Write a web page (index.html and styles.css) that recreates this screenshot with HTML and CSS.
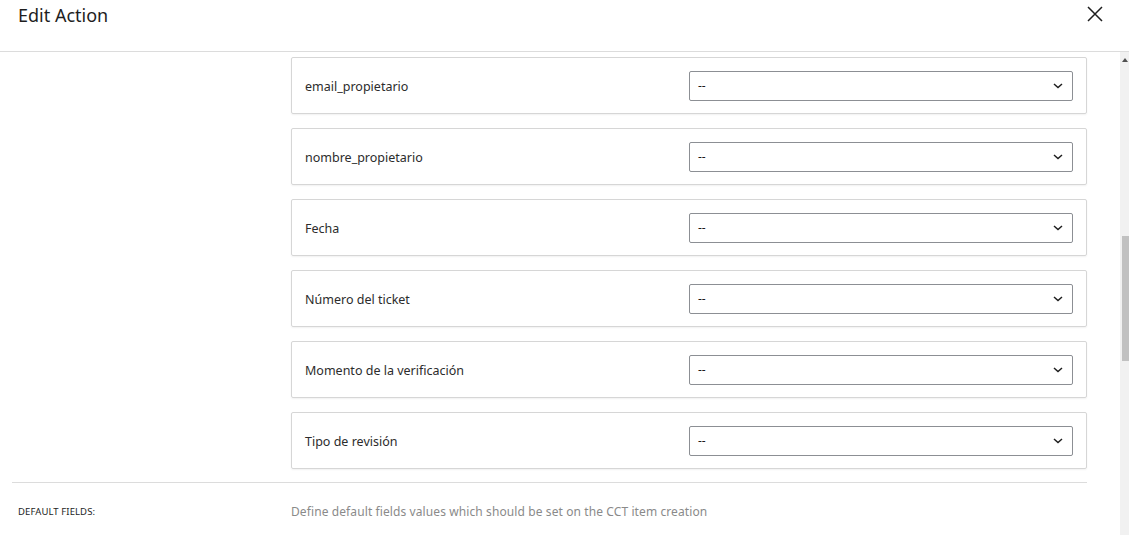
FILE: index.html
```html
<!DOCTYPE html>
<html lang="en">
<head>
<meta charset="utf-8">
<title>Edit Action</title>
<link rel="stylesheet" href="styles.css">
</head>
<body>
<div class="modal">
  <header class="modal-header">
    <h1 class="modal-title">Edit Action</h1>
    <button class="close-btn" aria-label="Close">
      <svg width="16" height="16" viewBox="0 0 16 16"><path d="M1 1L15 15M15 1L1 15" stroke="#1e1e1e" stroke-width="1.5" fill="none"/></svg>
    </button>
  </header>
  <div class="modal-body">
    <div class="content">
      <div class="map-row">
        <div class="map-spacer"></div>
        <div class="map-list">
          <div class="card"><span class="card-label">email_propietario</span><div class="select"><span>--</span><svg class="chev" width="10" height="6" viewBox="0 0 10 6"><path d="M1 1L5 4.5L9 1" stroke="#1e1e1e" stroke-width="1.5" fill="none"/></svg></div></div>
          <div class="card"><span class="card-label">nombre_propietario</span><div class="select"><span>--</span><svg class="chev" width="10" height="6" viewBox="0 0 10 6"><path d="M1 1L5 4.5L9 1" stroke="#1e1e1e" stroke-width="1.5" fill="none"/></svg></div></div>
          <div class="card"><span class="card-label">Fecha</span><div class="select"><span>--</span><svg class="chev" width="10" height="6" viewBox="0 0 10 6"><path d="M1 1L5 4.5L9 1" stroke="#1e1e1e" stroke-width="1.5" fill="none"/></svg></div></div>
          <div class="card"><span class="card-label">Número del ticket</span><div class="select"><span>--</span><svg class="chev" width="10" height="6" viewBox="0 0 10 6"><path d="M1 1L5 4.5L9 1" stroke="#1e1e1e" stroke-width="1.5" fill="none"/></svg></div></div>
          <div class="card"><span class="card-label">Momento de la verificación</span><div class="select"><span>--</span><svg class="chev" width="10" height="6" viewBox="0 0 10 6"><path d="M1 1L5 4.5L9 1" stroke="#1e1e1e" stroke-width="1.5" fill="none"/></svg></div></div>
          <div class="card"><span class="card-label">Tipo de revisión</span><div class="select"><span>--</span><svg class="chev" width="10" height="6" viewBox="0 0 10 6"><path d="M1 1L5 4.5L9 1" stroke="#1e1e1e" stroke-width="1.5" fill="none"/></svg></div></div>
        </div>
      </div>
      <div class="field-row">
        <div class="field-label">DEFAULT FIELDS:</div>
        <div class="field-desc">Define default fields values which should be set on the CCT item creation</div>
      </div>
    </div>
    <div class="scrollbar">
      <div class="scroll-arrow"></div>
      <div class="scroll-thumb"></div>
    </div>
  </div>
</div>
</body>
</html>
```

FILE: styles.css
```css
* { box-sizing: border-box; }
html, body { margin: 0; padding: 0; background: #fff; }
body {
  font-family: "Noto Sans", "Open Sans", sans-serif;
  color: #1e1e1e;
  width: 1129px;
  height: 535px;
  overflow: hidden;
}
.modal { display: flex; flex-direction: column; height: 535px; }
.modal-header {
  height: 52px;
  flex: none;
  display: flex;
  justify-content: space-between;
  align-items: flex-start;
  border-bottom: 1px solid #dcdcdc;
  padding: 0 26px 0 18px;
}
.modal-title {
  margin: 3px 0 0;
  font-size: 18px;
  font-weight: 400;
  line-height: 24px;
  color: #1e1e1e;
}
.close-btn {
  border: 0;
  background: none;
  padding: 0;
  margin-top: 6px;
  width: 16px;
  height: 16px;
  display: flex;
}
.modal-body { flex: 1; display: flex; min-height: 0; }
.content { flex: 1; padding: 5px 33px 0 12px; }
.map-row { display: flex; }
.map-spacer { width: 279px; flex: none; }
.map-list { flex: 1; display: flex; flex-direction: column; gap: 14px; }
.card {
  height: 57px;
  border: 1px solid #d6d6d6;
  border-radius: 2px;
  box-shadow: 0 1px 2px rgba(0,0,0,0.06);
  display: flex;
  align-items: center;
  justify-content: space-between;
  padding: 0 13px 0 13px;
}
.card-label { font-size: 12.5px; color: #2c2c2c; padding-top: 2px; }
.select {
  width: 384px;
  height: 30px;
  border: 1px solid #8c8f94;
  border-radius: 2px;
  display: flex;
  align-items: center;
  justify-content: space-between;
  padding: 0 9px 0 8px;
  font-size: 12px;
  color: #1e1e1e;
}
.chev { display: block; }
.field-row {
  margin-top: 13px;
  border-top: 1px solid #dcdcdc;
  display: flex;
  align-items: center;
  height: 53px;
  padding-top: 4px;
}
.field-label {
  width: 279px;
  flex: none;
  padding-left: 6px;
  font-size: 9.5px;
  letter-spacing: 0.1px;
  color: #1e1e1e;
}
.field-desc { font-size: 12px; letter-spacing: 0.1px; color: #8a8a8a; }
.scrollbar {
  width: 9px;
  flex: none;
  background: #f1f1f1;
  display: flex;
  flex-direction: column;
  align-items: flex-end;
}
.scroll-arrow {
  margin-top: 6px;
  width: 0; height: 0;
  border-left: 3px solid transparent;
  border-right: 3px solid transparent;
  border-bottom: 4px solid #505050;
  margin-right: 1px;
}
.scroll-thumb {
  margin-top: 174px;
  width: 7px;
  height: 125px;
  background: #c1c1c1;
}
```
